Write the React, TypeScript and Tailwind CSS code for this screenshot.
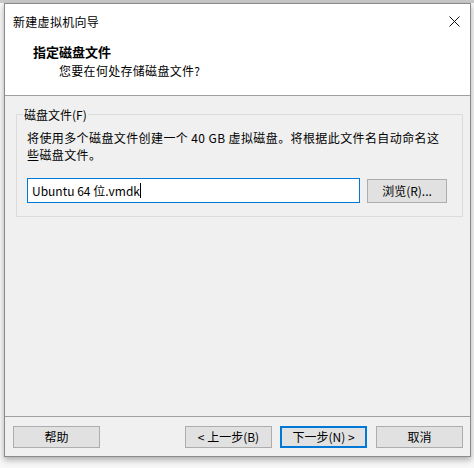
import React from 'react';

const cjk = 'font-["Microsoft_YaHei","Noto_Sans_CJK_SC",sans-serif]';

function WizardButton({ label, primary }: { label: string; primary?: boolean }) {
  return (
    <button
      className={
        primary
          ? 'block w-[87px] h-[22px] bg-[#e1e1e1] border border-[#0078d7] shadow-[inset_0_0_0_1px_#0078d7] text-[12px] leading-[16px] text-black'
          : 'block w-[87px] h-[22px] bg-[#e1e1e1] border border-[#adadad] text-[12px] leading-[16px] text-black'
      }
    >
      {label}
    </button>
  );
}

export default function App() {
  return (
    <div className={`w-[474px] h-[468px] bg-[#f7f7f7] overflow-hidden ${cjk}`}>
      {/* window behind, peeking at the top */}
      <div className="h-[3px] bg-[#c9c9c9]" />

      {/* dialog */}
      <div className="ml-[4px] w-[467px] h-[454px] border border-[#8a8a8a] bg-[#f0f0f0] flex flex-col shadow-[0_3px_6px_rgba(0,0,0,0.3)]">
        {/* title + header */}
        <div className="h-[92px] bg-white border-b border-[#a0a0a0]">
          <div className="h-[35px] flex items-center justify-between pl-[8px] pr-[10px]">
            <span className="text-[12px] leading-[17px] tracking-[0.3px] text-black">新建虚拟机向导</span>
            <svg width="11" height="11" viewBox="0 0 11 11">
              <path d="M0.5 0.5 L10.5 10.5 M10.5 0.5 L0.5 10.5" stroke="#111" strokeWidth="1" />
            </svg>
          </div>
          <div className="mt-[4px] pl-[28px] text-[13px] leading-[17px] font-bold text-black">指定磁盘文件</div>
          <div className="mt-[2px] pl-[54px] text-[12px] leading-[17px] tracking-[0.3px] text-black">您要在何处存储磁盘文件?</div>
        </div>

        {/* body */}
        <div className="h-[321px] border-b border-[#a0a0a0] pt-[10px] pl-[11px]">
          <fieldset className="w-[447px] border border-[#dcdcdc] p-0 m-0">
            <legend className="ml-[6px] px-[1px] text-[12px] leading-[17px] text-black">磁盘文件(F)</legend>
            <div className="pt-[6px] pl-[10px] pb-[13px]">
              <p className="text-[12px] leading-[17px] tracking-[0.4px] text-black whitespace-nowrap">
                将使用多个磁盘文件创建一个 40 GB 虚拟磁盘。将根据此文件名自动命名这
                <br />
                些磁盘文件。
              </p>
              <div className="mt-[15px] flex items-center gap-[7px]">
                <div className="w-[333px] h-[25px] bg-white border border-[#0078d7] flex items-center pl-[4px] text-[12px] leading-[16px] text-black">
                  <span>Ubuntu 64 位.vmdk</span>
                  <span className="w-[1px] h-[15px] bg-black" />
                </div>
                <button className="w-[80px] h-[24px] bg-[#e1e1e1] border border-[#adadad] text-[12px] leading-[16px] text-black">
                  浏览(R)...
                </button>
              </div>
            </div>
          </fieldset>
        </div>

        {/* buttons */}
        <div className="flex-1 flex items-start pt-[9px] pl-[8px] pr-[7px]">
          <WizardButton label="帮助" />
          <div className="flex-1" />
          <div className="flex items-start gap-[8px]">
            <WizardButton label="< 上一步(B)" />
            <WizardButton label="下一步(N) >" primary />
            <span className="w-[1px]" />
          </div>
          <WizardButton label="取消" />
        </div>
      </div>
    </div>
  );
}
